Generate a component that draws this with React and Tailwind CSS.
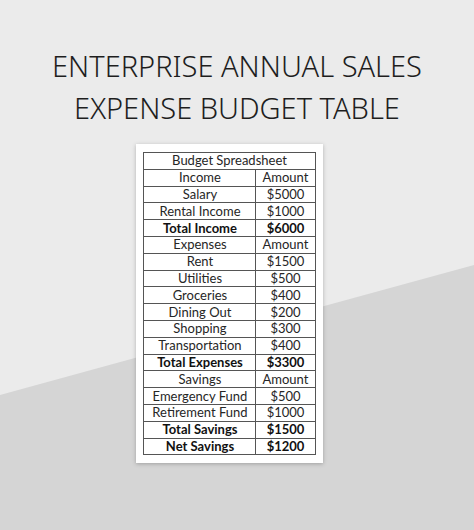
const rows = [
  ["Income", "Amount"],
  ["Salary", "$5000"],
  ["Rental Income", "$1000"],
  ["Total Income", "$6000", true],
  ["Expenses", "Amount"],
  ["Rent", "$1500"],
  ["Utilities", "$500"],
  ["Groceries", "$400"],
  ["Dining Out", "$200"],
  ["Shopping", "$300"],
  ["Transportation", "$400"],
  ["Total Expenses", "$3300", true],
  ["Savings", "Amount"],
  ["Emergency Fund", "$500"],
  ["Retirement Fund", "$1000"],
  ["Total Savings", "$1500", true],
  ["Net Savings", "$1200", true],
];

export default function App() {
  return (
    <div className="relative w-[474px] h-[530px] overflow-hidden bg-[#ebebeb]">
      <svg className="absolute inset-0" width="474" height="530" viewBox="0 0 474 530">
        <polygon points="0,395 474,265 474,530 0,530" fill="#d5d5d5" />
      </svg>

      <div className="relative flex flex-col items-center pt-[45px]">
        <h1
          className="text-center text-[29px] leading-[42px] font-light text-[#1e1e1e]"
          style={{ fontFamily: '"Noto Sans", sans-serif' }}
        >
          ENTERPRISE ANNUAL SALES
          <br />
          EXPENSE BUDGET TABLE
        </h1>

        <div className="mt-[15px] mr-[15px] bg-white px-[7px] pt-[8px] pb-[8px] shadow-[0_1px_4px_rgba(0,0,0,0.25)]">
          <table
            className="table-fixed w-[171px] border-collapse text-[13px] text-[#262626]"
            style={{ fontFamily: 'Lato, "Noto Sans", sans-serif' }}
          >
            <colgroup>
              <col className="w-[112px]" />
              <col className="w-[59px]" />
            </colgroup>
            <tbody>
              <tr>
                <td colSpan={2} className="h-[16.8px] border border-[#555] text-center leading-none">
                  Budget Spreadsheet
                </td>
              </tr>
              {rows.map(([label, amount, bold]) => (
                <tr key={label} className={bold ? "font-bold text-[#111]" : ""}>
                  <td className="h-[16.8px] border border-[#555] text-center leading-none whitespace-nowrap">
                    {label}
                  </td>
                  <td className="h-[16.8px] border border-[#555] text-center leading-none">
                    {amount}
                  </td>
                </tr>
              ))}
            </tbody>
          </table>
        </div>
      </div>
    </div>
  );
}
